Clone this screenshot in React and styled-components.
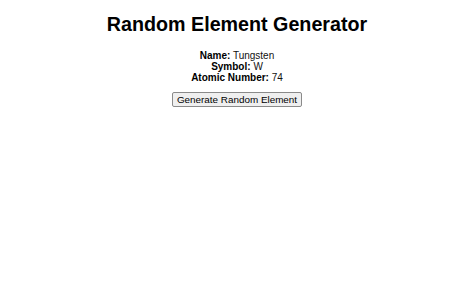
import React, { useState } from "react";
import styled, { createGlobalStyle } from "styled-components";

const GlobalStyle = createGlobalStyle`
  html, body { margin: 0; padding: 0; background: #ffffff; }
  body { font-family: "Liberation Sans", Arial, sans-serif; color: #000; }
`;

const Page = styled.div`
  display: flex;
  flex-direction: column;
  align-items: center;
  text-align: center;
  padding-top: 13px;
`;

const Title = styled.h1`
  margin: 0;
  font-size: 19.7px;
  line-height: 23px;
  font-weight: 700;
`;

const Info = styled.div`
  margin-top: 14px;
  display: flex;
  flex-direction: column;
  align-items: center;
`;

const Line = styled.p`
  margin: 0;
  font-size: 10px;
  line-height: 11px;
  color: #111;
`;

const Label = styled.strong`
  font-weight: 700;
  color: #000;
`;

const Button = styled.button`
  margin-top: 9px;
  font-family: "Liberation Sans", Arial, sans-serif;
  font-size: 9.9px;
  line-height: 11px;
  padding: 1px 4px;
  color: #000;
  background: #efefef;
  border: 1px solid #8a8a8a;
  border-radius: 2px;
  cursor: pointer;
`;

const elements = [
  { name: "Tungsten", symbol: "W", number: 74 },
  { name: "Hydrogen", symbol: "H", number: 1 },
  { name: "Carbon", symbol: "C", number: 6 },
  { name: "Oxygen", symbol: "O", number: 8 },
  { name: "Iron", symbol: "Fe", number: 26 },
  { name: "Gold", symbol: "Au", number: 79 },
];

export default function App() {
  const [el, setEl] = useState(elements[0]);
  return (
    <>
      <GlobalStyle />
      <Page>
        <Title>Random Element Generator</Title>
        <Info>
          <Line>
            <Label>Name:</Label> {el.name}
          </Line>
          <Line>
            <Label>Symbol:</Label> {el.symbol}
          </Line>
          <Line>
            <Label>Atomic Number:</Label> {el.number}
          </Line>
        </Info>
        <Button
          onClick={() =>
            setEl(elements[Math.floor(Math.random() * elements.length)])
          }
        >
          Generate Random Element
        </Button>
      </Page>
    </>
  );
}
